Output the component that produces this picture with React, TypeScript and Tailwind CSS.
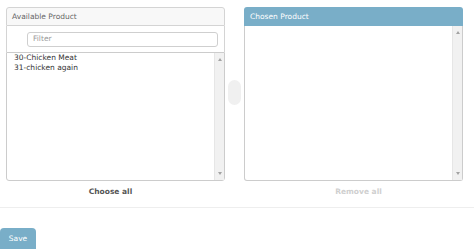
import React from "react";

function Scrollbar() {
  return (
    <div className="flex w-[10px] flex-col items-center justify-between border-l border-[#e6e6e6] bg-[#f1f1f1]">
      <div className="mt-[5px]">
        <div className="h-0 w-0 border-x-[2.5px] border-b-[3px] border-x-transparent border-b-[#a3a3a3]" />
      </div>
      <div className="mb-[5px]">
        <div className="h-0 w-0 border-x-[2.5px] border-t-[3px] border-x-transparent border-t-[#a3a3a3]" />
      </div>
    </div>
  );
}

export default function App() {
  return (
    <div
      className="relative h-[249px] w-[474px] overflow-hidden bg-white text-[7.5px] leading-none"
      style={{ fontFamily: '"DejaVu Sans", Verdana, sans-serif' }}
    >
      <div className="flex pl-[6px] pt-[7px]">
        {/* Available */}
        <div className="flex w-[219px] flex-col">
          <div className="flex h-[19px] items-center rounded-t-[3px] border border-[#d4d4d4] bg-[#f8f8f8] pl-[5px] text-[#666]">
            Available Product
          </div>
          <div className="flex h-[26px] items-center border-x border-[#d4d4d4] bg-white pl-[20px] pr-[6px]">
            <div className="flex h-[15px] flex-1 items-center rounded-[3px] border border-[#cfcfcf] bg-white pl-[5px] text-[#999]">
              Filter
            </div>
          </div>
          <div className="flex h-[129px] rounded-b-[3px] border border-[#cccccc] bg-white">
            <div className="flex flex-1 flex-col gap-[2.5px] pl-[7px] pt-[1px] text-[#333]">
              <div>30-Chicken Meat</div>
              <div>31-chicken again</div>
            </div>
            <Scrollbar />
          </div>
          <div className="mt-[7px] pr-[10px] text-center font-bold text-[#555]">Choose all</div>
        </div>

        {/* chooser */}
        <div className="flex w-[19px] justify-center pt-[73px]">
          <div className="h-[25px] w-[13px] rounded-full bg-[#f0f0f0]" />
        </div>

        {/* Chosen */}
        <div className="flex w-[219px] flex-col">
          <div className="flex h-[19px] items-center rounded-t-[3px] bg-[#79aec8] pl-[6px] text-white">
            Chosen Product
          </div>
          <div className="flex h-[155px] rounded-b-[3px] border border-t-0 border-[#cccccc] bg-white">
            <div className="flex-1" />
            <Scrollbar />
          </div>
          <div className="mt-[7px] pl-[10px] text-center font-bold text-[#cfcfcf]">Remove all</div>
        </div>
      </div>

      <div className="mt-[11px] h-px w-full bg-[#eeeeee]" />

      <div className="mt-[20px]">
        <div className="flex h-[24px] w-[36px] items-center justify-center rounded-[4px] bg-[#79aec8] pb-[2px] text-white">
          Save
        </div>
      </div>
    </div>
  );
}
